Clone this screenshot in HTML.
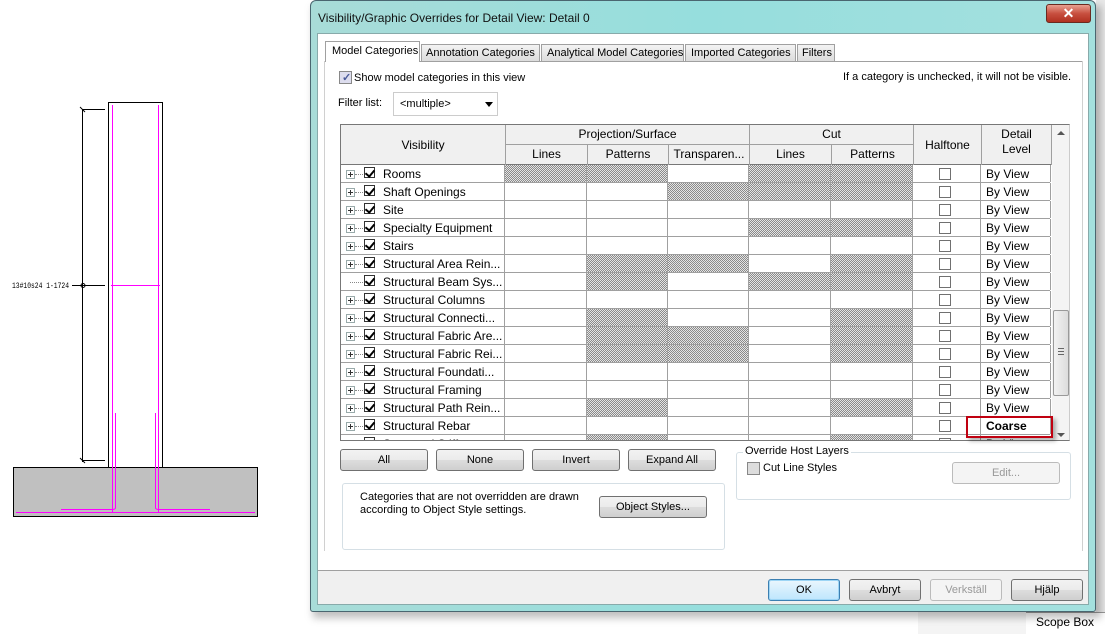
<!DOCTYPE html>
<html><head><meta charset="utf-8">
<style>
*{box-sizing:border-box;margin:0;padding:0}
body{width:1105px;height:634px;overflow:hidden;background:#fff;position:relative;font-family:"Liberation Sans",sans-serif;font-size:11px;color:#000;white-space:nowrap}
.a{position:absolute}
.hat{background:repeating-conic-gradient(#8a8a8a 0 25%,#e4e4e4 0 50%) 0 0/2px 2px}
.btn{position:absolute;height:22px;border:1px solid #707070;border-radius:3px;background:linear-gradient(#f2f2f2 0,#ebebeb 50%,#dddddd 51%,#cfcfcf 100%);text-align:center;line-height:20px;font-size:11px}
.cb{position:absolute;width:11px;height:11px;border:1px solid #333;background:#fff}
.cb:after{content:"";position:absolute;left:2px;top:0px;width:4px;height:7px;border:solid #000;border-width:0 2px 2px 0;transform:rotate(40deg)}
.ub{position:absolute;width:13px;height:13px;border:1px solid #707070;background:#fff}
.row{position:absolute;left:341px;width:709px;height:18px;border-bottom:1px solid #a0a0a0}
.c{position:absolute;top:0;height:17px;border-right:1px solid #a0a0a0}
.name{position:absolute;left:42px;top:2px;font-size:12px;white-space:nowrap}
.plus{position:absolute;left:5px;top:5px;width:9px;height:9px;border:1px solid #9aa;background:#fff}
.plus:before{content:"";position:absolute;left:1px;top:3px;width:5px;height:1px;background:#333}
.plus:after{content:"";position:absolute;left:3px;top:1px;width:1px;height:5px;background:#333}
.dots{position:absolute;left:14px;top:9px;width:8px;border-top:1px dotted #888}
.bv{position:absolute;left:645px;top:2px;font-size:12px}
</style></head><body>

<svg class="a" style="left:0;top:0" width="300" height="634">
<rect x="108.5" y="102.5" width="54" height="365" fill="#fff" stroke="#000"/>
<rect x="13.5" y="467.5" width="244" height="49" fill="#c0c0c0" stroke="#000"/>
<g stroke="#000" fill="none">
<line x1="82.5" y1="109" x2="82.5" y2="462"/>
<line x1="82" y1="109.5" x2="105" y2="109.5"/>
<line x1="82" y1="460.5" x2="105" y2="460.5"/>
<line x1="72" y1="285.5" x2="105" y2="285.5"/>
<circle cx="83" cy="285.5" r="2"/>
<line x1="80" y1="107" x2="85" y2="112"/><line x1="80" y1="458" x2="85" y2="463"/>
</g>
<text x="12" y="288" font-size="8" font-family="Liberation Mono" textLength="57" lengthAdjust="spacingAndGlyphs">13#10s24 1-1724</text>
<g stroke="#ff00ff" fill="none">
<line x1="112.5" y1="105" x2="112.5" y2="512"/>
<line x1="158.5" y1="105" x2="158.5" y2="512"/>
<line x1="111" y1="285.5" x2="160" y2="285.5"/>
<path d="M115.5 413 V508 Q115.5 509 113 509.5 H61"/>
<path d="M155.5 413 V508 Q155.5 509 158 509.5 H210"/>
<line x1="16" y1="512.5" x2="255" y2="512.5"/>
</g>
</svg>

<div class="a" style="left:1096px;top:0;width:9px;height:634px;background:#e8e8e8"></div>
<div class="a" style="left:918px;top:612px;width:108px;height:22px;background:#f4f4f4"></div>
<div class="a" style="left:1026px;top:612px;width:79px;height:22px;background:#fff;border-top:1px solid #999"></div>
<div class="a" style="left:1036px;top:615px;font-size:12px">Scope Box</div>

<div class="a" style="left:313px;top:6px;width:788px;height:612px;background:rgba(0,0,0,.25);filter:blur(4px)"></div>
<div class="a" style="left:310px;top:0;width:786px;height:612px;border:1px solid #4a6670;border-radius:6px 6px 3px 3px;background:linear-gradient(90deg,#a8dcd8 0,#96dedd 50%,#a4e0de 100%)"></div>
<div class="a" style="left:318px;top:11px;font-size:12px;color:#111">Visibility/Graphic Overrides for Detail View: Detail 0</div>
<div class="a" style="left:1046px;top:4px;width:45px;height:19px;border:1px solid #6a2a20;border-radius:3px;background:linear-gradient(#e8a090,#c85040 50%,#b03020);color:#fff;text-align:center;font-weight:bold;font-size:14px;line-height:17px">✕</div>

<div class="a" style="left:317px;top:33px;width:772px;height:572px;background:#f0f0f0;border:1px solid #8aa"></div>
<div class="a" style="left:318px;top:34px;width:770px;height:537px;background:#fff;border-bottom:1px solid #a0a0a0"></div>

<div class="a" style="left:324px;top:61px;width:759px;height:1px;background:#a0a0a0"></div>
<div class="a" style="left:324px;top:61px;width:1px;height:490px;background:#d0d0d0"></div>
<div class="a" style="left:1082px;top:61px;width:1px;height:490px;background:#d0d0d0"></div>
<div class="a" style="left:325px;top:41px;width:95px;height:21px;background:#fff;border:1px solid #a0a0a0;border-bottom:none;padding:3px 0 0 6px">Model Categories</div>
<div class="a" style="left:421px;top:44px;width:119px;height:18px;background:linear-gradient(#f3f3f3,#dcdcdc);border:1px solid #a0a0a0;padding:2px 0 0 4px">Annotation Categories</div>
<div class="a" style="left:541px;top:44px;width:143px;height:18px;background:linear-gradient(#f3f3f3,#dcdcdc);border:1px solid #a0a0a0;padding:2px 0 0 5px">Analytical Model Categories</div>
<div class="a" style="left:685px;top:44px;width:111px;height:18px;background:linear-gradient(#f3f3f3,#dcdcdc);border:1px solid #a0a0a0;padding:2px 0 0 5px">Imported Categories</div>
<div class="a" style="left:797px;top:44px;width:38px;height:18px;background:linear-gradient(#f3f3f3,#dcdcdc);border:1px solid #a0a0a0;padding:2px 0 0 4px">Filters</div>

<div class="ub" style="left:339px;top:71px;border-color:#888;background:#dde"></div>
<div class="a" style="left:342px;top:71px;color:#4a5a9a;font-size:11px;font-weight:bold">✓</div>
<div class="a" style="left:354px;top:72px">Show model categories in this view</div>
<div class="a" style="left:843px;top:71px">If a category is unchecked, it will not be visible.</div>
<div class="a" style="left:338px;top:97px">Filter list:</div>
<div class="a" style="left:393px;top:92px;width:105px;height:24px;border:1px solid #ccc;background:#fff;padding:5px 0 0 6px">&lt;multiple&gt;</div>
<div class="a" style="left:485px;top:102px;border:4px solid transparent;border-top:5px solid #000"></div>

<div class="a" style="left:340px;top:124px;width:730px;height:317px;border:1px solid #777;border-right:1px solid #ccc;background:#fff;overflow:hidden">
 <div class="a" style="left:0;top:0;width:711px;height:40px;background:#f0f0f0;border-bottom:1px solid #777"></div>
 <div class="a" style="left:0;top:0;width:165px;height:40px;border-right:1px solid #a0a0a0;text-align:center;line-height:40px;font-size:12px">Visibility</div>
 <div class="a" style="left:165px;top:0;width:244px;height:20px;border-right:1px solid #a0a0a0;border-bottom:1px solid #a0a0a0;text-align:center;line-height:19px;font-size:12px">Projection/Surface</div>
 <div class="a" style="left:409px;top:0;width:164px;height:20px;border-right:1px solid #a0a0a0;border-bottom:1px solid #a0a0a0;text-align:center;line-height:19px;font-size:12px">Cut</div>
 <div class="a" style="left:165px;top:20px;width:82px;height:20px;border-right:1px solid #a0a0a0;text-align:center;line-height:19px;font-size:12px">Lines</div>
 <div class="a" style="left:247px;top:20px;width:81px;height:20px;border-right:1px solid #a0a0a0;text-align:center;line-height:19px;font-size:12px">Patterns</div>
 <div class="a" style="left:328px;top:20px;width:81px;height:20px;border-right:1px solid #a0a0a0;text-align:center;line-height:19px;font-size:12px">Transparen...</div>
 <div class="a" style="left:409px;top:20px;width:82px;height:20px;border-right:1px solid #a0a0a0;text-align:center;line-height:19px;font-size:12px">Lines</div>
 <div class="a" style="left:491px;top:20px;width:82px;height:20px;border-right:1px solid #a0a0a0;text-align:center;line-height:19px;font-size:12px">Patterns</div>
 <div class="a" style="left:573px;top:0;width:68px;height:40px;border-right:1px solid #a0a0a0;text-align:center;line-height:40px;font-size:12px">Halftone</div>
 <div class="a" style="left:641px;top:0;width:70px;height:40px;border-right:1px solid #a0a0a0;text-align:center;padding-top:2px;line-height:15px;font-size:12px">Detail<br>Level</div>
 <div class="a" style="left:711px;top:0;width:18px;height:316px;background:#f4f4f4"></div>
 <div class="a" style="left:716px;top:6px;border:4px solid transparent;border-bottom:4px solid #555;border-top:none"></div>
 <div class="a" style="left:716px;top:308px;border:4px solid transparent;border-top:4px solid #555;border-bottom:none"></div>
 <div class="a" style="left:712px;top:185px;width:16px;height:86px;border:1px solid #999;border-radius:2px;background:linear-gradient(90deg,#f2f2f2,#dcdcdc)"></div>
 <div class="a" style="left:717px;top:223px;width:6px;height:7px;border-top:1px solid #666;border-bottom:1px solid #666"></div>
 <div class="a" style="left:717px;top:226px;width:6px;height:1px;background:#666"></div>
</div>
<div id="rows"></div>

<div class="a" style="left:966px;top:416px;width:87px;height:22px;border:2px solid #c00010;box-shadow:3px 3px 4px rgba(0,0,0,.3)"></div>

<div class="btn" style="left:340px;top:449px;width:88px">All</div>
<div class="btn" style="left:436px;top:449px;width:88px">None</div>
<div class="btn" style="left:532px;top:449px;width:88px">Invert</div>
<div class="btn" style="left:628px;top:449px;width:88px">Expand All</div>

<div class="a" style="left:342px;top:483px;width:383px;height:67px;border:1px solid #d5dfe5;border-radius:3px"></div>
<div class="a" style="left:360px;top:491px;line-height:13px">Categories that are not overridden are drawn<br>according to Object Style settings.</div>
<div class="btn" style="left:599px;top:496px;width:108px">Object Styles...</div>

<div class="a" style="left:736px;top:452px;width:335px;height:48px;border:1px solid #d5dfe5;border-radius:3px"></div>
<div class="a" style="left:743px;top:445px;background:#fff;padding:0 2px">Override Host Layers</div>
<div class="ub" style="left:747px;top:462px;border-color:#888;background:#ddd"></div>
<div class="a" style="left:763px;top:462px">Cut Line Styles</div>
<div class="btn" style="left:952px;top:462px;width:108px;color:#999;border-color:#bbb;background:#f4f4f4">Edit...</div>

<div class="btn" style="left:768px;top:579px;width:72px;border-color:#3c7fb1;background:linear-gradient(#eaf6fd,#bee6fd);box-shadow:0 0 0 1px #9dd5f5 inset">OK</div>
<div class="btn" style="left:849px;top:579px;width:72px">Avbryt</div>
<div class="btn" style="left:930px;top:579px;width:72px;color:#999;border-color:#bbb;background:#f4f4f4">Verkställ</div>
<div class="btn" style="left:1011px;top:579px;width:72px">Hjälp</div>

<script>
var d=[["Rooms",[1,1,0,1,1]],["Shaft Openings",[0,0,1,1,1]],["Site",[0,0,0,0,0]],["Specialty Equipment",[0,0,0,1,1]],["Stairs",[0,0,0,0,0]],["Structural Area Rein...",[0,1,1,0,1]],["Structural Beam Sys...",[0,1,0,1,1]],["Structural Columns",[0,0,0,0,0]],["Structural Connecti...",[0,1,0,0,1]],["Structural Fabric Are...",[0,1,1,0,1]],["Structural Fabric Rei...",[0,1,1,0,1]],["Structural Foundati...",[0,0,0,0,0]],["Structural Framing",[0,0,0,0,0]],["Structural Path Rein...",[0,1,0,0,1]],["Structural Rebar",[0,0,0,0,0]],["Structural Stiff...",[0,1,0,0,1]]];
var cols=[[164,82],[246,81],[327,81],[408,82],[490,82]];
var h="";
for(var i=0;i<d.length;i++){
 var ry=165+i*18;
 var st=(i==15)?"height:5px;overflow:hidden;border-bottom:none;":"";
 h+='<div class="row" style="top:'+ry+'px;'+st+'">';
 h+='<div class="c" style="left:0;width:164px"></div>';
 for(var j=0;j<5;j++){h+='<div class="c'+(d[i][1][j]?' hat':'')+'" style="left:'+cols[j][0]+'px;width:'+cols[j][1]+'px"></div>';}
 h+='<div class="c" style="left:572px;width:68px"></div><div class="c" style="left:640px;width:70px"></div>';
 if(i!=6)h+='<div class="plus"></div>';
 h+='<div class="dots"'+(i==6?' style="left:9px;width:13px"':'')+'></div>';
 h+='<div class="cb" style="left:23px;top:2px"></div>';
 h+='<div class="name">'+d[i][0]+'</div>';
 h+='<div class="ub" style="left:598px;top:3px;width:12px;height:12px"></div>';
 h+='<div class="bv"'+(i==14?' style="font-weight:bold"':'')+'>'+(i==14?'Coarse':'By View')+'</div>';
 h+='</div>';
}
document.getElementById('rows').innerHTML=h;
</script>
</body></html>
